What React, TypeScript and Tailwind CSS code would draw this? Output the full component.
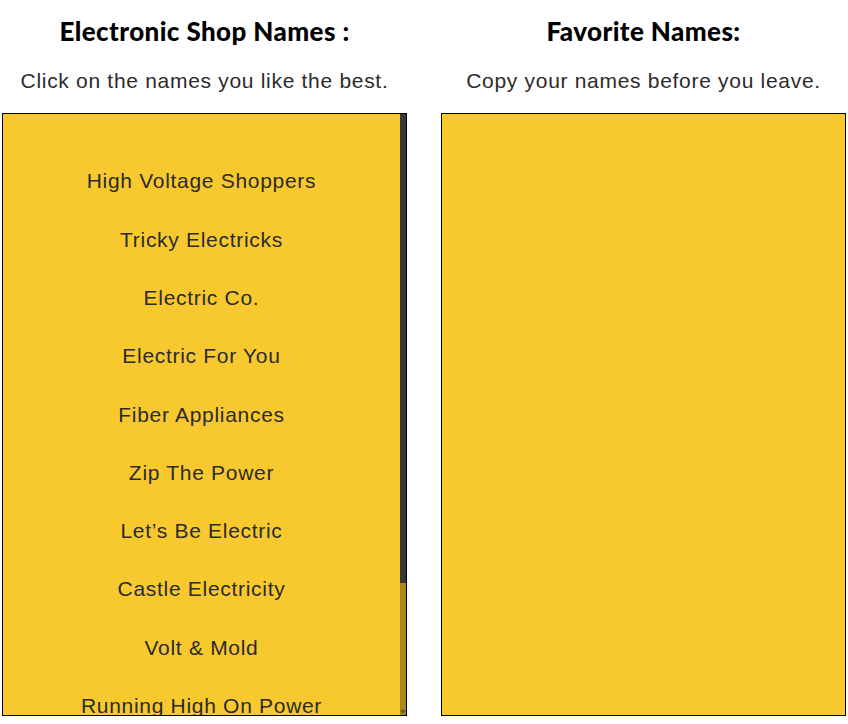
import React from 'react';

const shopNames = [
  "High Voltage Shoppers",
  "Tricky Electricks",
  "Electric Co.",
  "Electric For You",
  "Fiber Appliances",
  "Zip The Power",
  "Let’s Be Electric",
  "Castle Electricity",
  "Volt & Mold",
  "Running High On Power",
  "Watt A Deal",
  "Plug & Play Store",
];

const Heading = ({ title, subtitle }: { title: string; subtitle: string }) => (
  <div className="flex flex-col items-center">
    <h2 className="mt-[14px] text-[26px] leading-[34px] font-black tracking-[0.4px] text-black [font-family:Lato,'Liberation_Sans',sans-serif]">
      {title}
    </h2>
    <p className="mt-[19px] text-[21px] leading-[28px] tracking-[0.7px] text-[#2b2b2b] [font-family:'Liberation_Sans',Arial,sans-serif]">
      {subtitle}
    </p>
  </div>
);

export default function App() {
  return (
    <div className="h-[724px] w-[848px] overflow-hidden bg-white px-[2px]">
      <div className="grid grid-cols-2 gap-[34px]">
        <div className="flex flex-col">
          <Heading title="Electronic Shop Names :" subtitle="Click on the names you like the best." />
          {/* list box with its scrollbar drawn beside it */}
          <div className="mt-[18px] flex h-[603px] overflow-hidden border border-black bg-[#f8c92e]">
            <ul className="min-w-0 flex-1 pt-[38px]">
              {shopNames.map((name) => (
                <li
                  key={name}
                  className="flex h-[58.3px] cursor-pointer items-center justify-center whitespace-nowrap text-[21px] tracking-[0.7px] text-[#2b2b2b] [font-family:'Liberation_Sans',Arial,sans-serif]"
                >
                  {name}
                </li>
              ))}
            </ul>
            <div className="flex w-[6px] flex-col bg-[#a8871f]">
              <div className="h-[469px] bg-[#383838]" />
              <div className="flex-1" />
              <div className="mx-auto mb-[1px] h-0 w-0 border-x-[3px] border-t-[4px] border-x-transparent border-t-[#6b5a1c]" />
            </div>
          </div>
        </div>
        <div className="flex flex-col">
          <Heading title="Favorite Names:" subtitle="Copy your names before you leave." />
          <div className="mt-[18px] h-[603px] border border-black bg-[#f8c92e]" />
        </div>
      </div>
    </div>
  );
}
